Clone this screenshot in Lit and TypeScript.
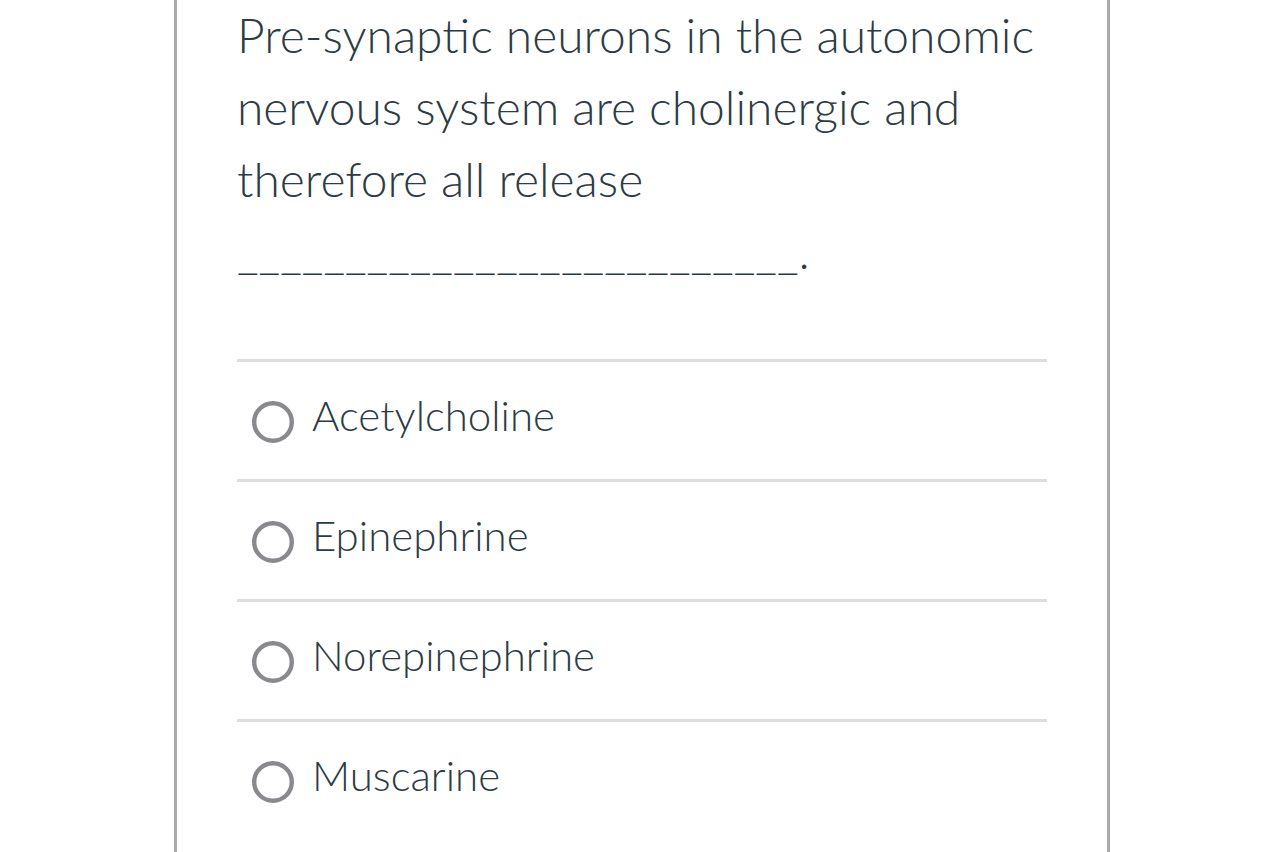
import { html, css, LitElement } from "lit";
import { customElement, property } from "lit/decorators.js";

@customElement("answer-option")
export class AnswerOption extends LitElement {
  @property() label = "";

  static styles = css`
    :host {
      display: block;
    }

    .answer {
      display: flex;
      box-sizing: border-box;
      height: 120px;
      border-top: 3px solid #dddddd;
      padding: 39px 0 0 15px;
    }

    .radio {
      display: block;
      width: 42px;
      height: 42px;
      margin-right: 18px;
    }

    .label {
      font-size: 42px;
      line-height: 50px;
      margin-top: -11px;
      white-space: nowrap;
    }
  `;

  render() {
    return html`
      <div class="answer" role="radio" aria-checked="false">
        <svg class="radio" viewBox="0 0 42 42">
          <circle cx="21" cy="21" r="18.8" fill="none" stroke="#8a898e" stroke-width="4.4" />
        </svg>
        <span class="label">${this.label}</span>
      </div>
    `;
  }
}

@customElement("app-root")
export class AppRoot extends LitElement {
  answers = ["Acetylcholine", "Epinephrine", "Norepinephrine", "Muscarine"];

  static styles = css`
    :host {
      display: block;
      height: 852px;
      overflow: hidden;
      background: #fff;
      color: #2d3b45;
      font-family: Lato, "Liberation Sans", sans-serif;
      font-weight: 300;
    }

    .question {
      box-sizing: border-box;
      width: 936px;
      height: 852px;
      margin-left: 174px;
      border: solid #aaaaaa;
      border-width: 0 3px;
      padding: 0 60px;
      overflow: hidden;
    }

    .text {
      height: 360px;
      margin-top: -1px;
      font-size: 47.95px;
      line-height: 72px;
      white-space: nowrap;
    }
  `;

  render() {
    return html`
      <div class="question">
        <div class="text">
          <div>Pre-synaptic neurons in the autonomic</div>
          <div>nervous system are cholinergic and</div>
          <div>therefore all release</div>
          <div>__________________________.</div>
        </div>
        <div class="answers" role="radiogroup">
          ${this.answers.map(
            (answer) => html`<answer-option .label=${answer}></answer-option>`
          )}
        </div>
      </div>
    `;
  }
}
